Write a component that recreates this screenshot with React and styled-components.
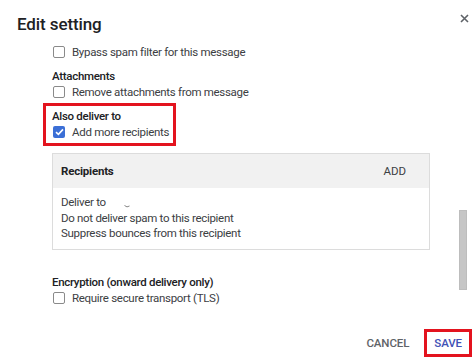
import React from "react";
import styled, { createGlobalStyle } from "styled-components";

const Global = createGlobalStyle`
  html, body { margin: 0; padding: 0; background: #fff; }
  body { font-family: Roboto, "Liberation Sans", Arial, sans-serif; }
  * { box-sizing: border-box; }
`;

const Dialog = styled.div`
  position: relative;
  width: 474px;
  height: 360px;
  overflow: hidden;
  display: flex;
  flex-direction: column;
  background: #fff;
`;

const Header = styled.div`
  display: flex;
  align-items: flex-start;
  justify-content: space-between;
  padding: 12px 5px 0 17px;
  height: 44px;
`;

const Title = styled.h1`
  margin: 0;
  font-size: 17px;
  line-height: 24px;
  font-weight: 500;
  letter-spacing: -0.1px;
  color: #202124;
`;

const CloseButton = styled.button`
  border: 0;
  background: none;
  padding: 0;
  margin-top: 1px;
  width: 10px;
  height: 10px;
  display: flex;
  align-items: center;
  justify-content: center;
  cursor: pointer;
`;

const Content = styled.div`
  flex: 1;
  display: flex;
  flex-direction: column;
  padding: 0 44px 0 52px;
`;

const Section = styled.div`
  display: flex;
  flex-direction: column;
  margin-top: ${(p) => p.$mt || 0}px;
`;

const Highlight = styled.div`
  display: flex;
  flex-direction: column;
  align-self: flex-start;
  margin: 3px 0 0 -9px;
  padding: 2px 4px 3px 6px;
  border: 3px solid #e3131e;
`;

const Label = styled.div`
  font-size: 11.5px;
  line-height: 16px;
  font-weight: 500;
  letter-spacing: -0.3px;
  color: #202124;
`;

const Option = styled.label`
  display: flex;
  align-items: center;
  height: 16px;
  font-size: 11.5px;
  letter-spacing: -0.3px;
  color: #3c4043;
  gap: 7px;
  padding-left: 1px;
`;

const Box = styled.span`
  width: 12px;
  height: 12px;
  border-radius: 2px;
  border: ${(p) => (p.$checked ? "none" : "1.3px solid #8a8a8a")};
  background: ${(p) => (p.$checked ? "#3b6fd6" : "#fff")};
  display: flex;
  align-items: center;
  justify-content: center;
  flex: none;
`;

const Panel = styled.div`
  margin-top: 7px;
  border: 1px solid #dcdcdc;
  display: flex;
  flex-direction: column;
`;

const PanelHeader = styled.div`
  height: 34px;
  background: #f1f1f1;
  display: flex;
  align-items: center;
  justify-content: space-between;
  padding: 0 23px 0 8px;
  font-size: 11.5px;
  letter-spacing: -0.2px;
  color: #202124;
`;

const PanelTitle = styled.span`
  font-weight: 700;
`;

const AddButton = styled.span`
  color: #3c4043;
  font-weight: 400;
  letter-spacing: 0;
`;

const PanelBody = styled.div`
  padding: 7px 8px 7px;
  font-size: 11.5px;
  letter-spacing: -0.3px;
  line-height: 15.5px;
  color: #3c4043;
`;

const Line = styled.div`
  display: flex;
  align-items: center;
`;

const Redacted = styled.span`
  display: inline-flex;
  margin-left: 18px;
  margin-top: 8px;
`;

const Footer = styled.div`
  display: flex;
  justify-content: flex-end;
  align-items: center;
  padding: 0 2px 3px 0;
`;

const TextButton = styled.button`
  border: 0;
  background: none;
  font-family: inherit;
  font-size: 11.5px;
  font-weight: 500;
  line-height: 22px;
  padding: 0 7px;
  color: ${(p) => (p.$primary ? "#3f51b5" : "#5f6368")};
  letter-spacing: -0.1px;
`;

const SaveFrame = styled.div`
  border: 3px solid #e3131e;
  margin-left: 8px;
  display: flex;
`;

const ScrollThumb = styled.div`
  position: absolute;
  left: 459px;
  top: 210px;
  width: 8px;
  height: 80px;
  background: #c6c6c6;
  border: 1px solid #bdbdbd;
`;

const Check = () => (
  <svg width="9" height="8" viewBox="0 0 9 8">
    <path d="M1 4.2 L3.4 6.4 L8 1.4" fill="none" stroke="#fff" strokeWidth="1.6" />
  </svg>
);

const Checkbox = ({ checked, children }) => (
  <Option>
    <Box $checked={checked}>{checked && <Check />}</Box>
    {children}
  </Option>
);

export default function App() {
  return (
    <>
      <Global />
      <Dialog>
        <Header>
          <Title>Edit setting</Title>
          <CloseButton aria-label="Close">
            <svg width="9" height="9" viewBox="0 0 9 9">
              <path d="M1 1 L8 8 M8 1 L1 8" stroke="#5f6368" strokeWidth="1.6" />
            </svg>
          </CloseButton>
        </Header>
        <Content>
          <Checkbox>Bypass spam filter for this message</Checkbox>
          <Section $mt={8}>
            <Label>Attachments</Label>
            <Checkbox>Remove attachments from message</Checkbox>
          </Section>
          <Highlight>
            <Label>Also deliver to</Label>
            <Checkbox checked>Add more recipients</Checkbox>
          </Highlight>
          <Panel>
            <PanelHeader>
              <PanelTitle>Recipients</PanelTitle>
              <AddButton>ADD</AddButton>
            </PanelHeader>
            <PanelBody>
              <Line>
                Deliver to
                <Redacted>
                  <svg width="6" height="3" viewBox="0 0 6 3">
                    <path d="M0.5 0.5 Q3 3 5.5 1" fill="none" stroke="#777" strokeWidth="0.9" />
                  </svg>
                </Redacted>
              </Line>
              <Line>Do not deliver spam to this recipient</Line>
              <Line>Suppress bounces from this recipient</Line>
            </PanelBody>
          </Panel>
          <Section $mt={24}>
            <Label>Encryption (onward delivery only)</Label>
            <Checkbox>Require secure transport (TLS)</Checkbox>
          </Section>
        </Content>
        <Footer>
          <TextButton>CANCEL</TextButton>
          <SaveFrame>
            <TextButton $primary>SAVE</TextButton>
          </SaveFrame>
        </Footer>
        <ScrollThumb />
      </Dialog>
    </>
  );
}
